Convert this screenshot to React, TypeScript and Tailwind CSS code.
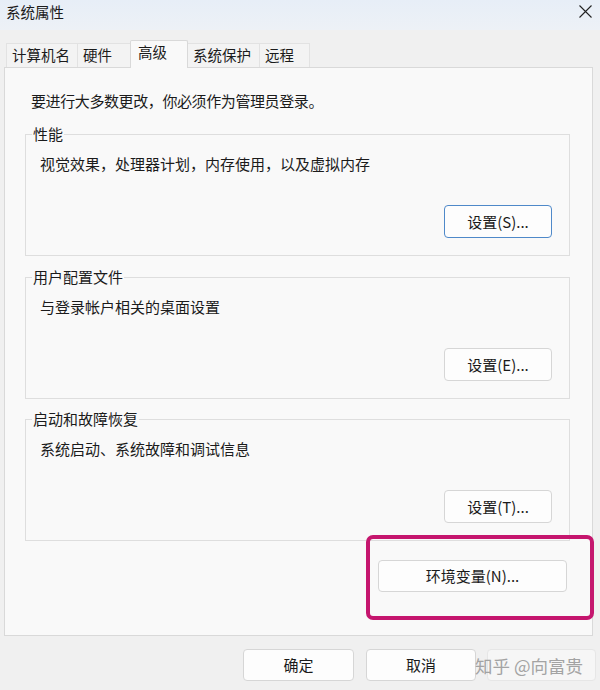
import React from "react";

const font = { fontFamily: '"Noto Sans CJK SC", "Noto Sans", sans-serif' };

function Tab({ label, w, selected, first }: { label: string; w: string; selected?: boolean; first?: boolean }) {
  if (selected) {
    return (
      <div
        className={`${w} h-[28px] -ml-px -mb-px relative z-10 border-l border-t border-r border-[#d9d9d9] bg-[#f9f9f9] pl-[7px] pt-[1px] text-[14.5px] leading-[20px] rounded-t-[2px]`}
      >
        {label}
      </div>
    );
  }
  return (
    <div
      className={`${w} h-[24px] ${first ? "" : "-ml-px"} border-l border-t border-r border-[#e2e2e2] bg-[#f3f3f3] pl-[5px] pt-[1px] text-[14.5px] leading-[20px]`}
    >
      {label}
    </div>
  );
}

function Btn({ label, w, h, primary }: { label: string; w: string; h: string; primary?: boolean }) {
  return (
    <div
      className={`${w} ${h} flex items-center justify-center rounded-[4px] bg-[#fdfdfd] text-[15px] leading-[20px] border ${
        primary ? "border-[#4f89c9]" : "border-[#d6d6d6]"
      }`}
    >
      {label}
    </div>
  );
}

function Group({ title, desc, btn }: { title: string; desc: string; btn: string; }) {
  return (
    <div className="relative ml-[20px] w-[545px] h-[122px] border border-[#dedede]">
      <span className="absolute left-[6px] -top-[11px] px-[1px] bg-[#f9f9f9] text-[15px] leading-[20px]">{title}</span>
      <p className="pl-[14px] pt-[19px] text-[15px] leading-[20px]">{desc}</p>
      <div className="flex justify-end pr-[17px] mt-[31px]">
        <Btn label={btn} w="w-[108px]" h="h-[33px]" primary={btn === "设置(S)..."} />
      </div>
    </div>
  );
}

export default function App() {
  return (
    <div className="w-[600px] h-[690px] bg-[#f0f0f0] relative overflow-hidden text-[#1b1b1b]" style={font}>
      {/* title bar */}
      <div className="h-[30px] bg-gradient-to-b from-[#e7eef7] to-[#edf1f6] flex items-start justify-between">
        <span className="ml-[6px] mt-[2px] text-[14.5px] leading-[20px]">系统属性</span>
        <svg className="mr-[8px] mt-[5px]" width="13" height="13" viewBox="0 0 13 13">
          <path d="M0.5 0.5 L12.5 12.5 M12.5 0.5 L0.5 12.5" stroke="#222" strokeWidth="1.1" fill="none" />
        </svg>
      </div>

      {/* tabs */}
      <div className="h-[37px] flex items-end pl-[6px]">
        <Tab label="计算机名" w="w-[72px]" first />
        <Tab label="硬件" w="w-[54px]" />
        <Tab label="高级" w="w-[58px]" selected />
        <Tab label="系统保护" w="w-[73px]" />
        <Tab label="远程" w="w-[51px]" />
      </div>

      {/* panel */}
      <div className="ml-[4px] w-[589px] h-[569px] border border-[#d9d9d9] bg-[#f9f9f9]">
        <p className="pl-[26px] pt-[23px] text-[15px] leading-[20px] tracking-[-0.4px]">要进行大多数更改，你必须作为管理员登录。</p>
        <div className="mt-[23px]">
          <Group title="性能" desc="视觉效果，处理器计划，内存使用，以及虚拟内存" btn="设置(S)..." />
        </div>
        <div className="mt-[21px]">
          <Group title="用户配置文件" desc="与登录帐户相关的桌面设置" btn="设置(E)..." />
        </div>
        <div className="mt-[20px]">
          <Group title="启动和故障恢复" desc="系统启动、系统故障和调试信息" btn="设置(T)..." />
        </div>
        <div className="flex justify-end pr-[25px] mt-[19px]">
          <Btn label="环境变量(N)..." w="w-[189px]" h="h-[32px]" />
        </div>
      </div>

      {/* bottom buttons */}
      <div className="flex justify-end pr-[4px] mt-[13px]">
        <Btn label="确定" w="w-[111px]" h="h-[32px]" />
        <div className="ml-[12px]">
          <Btn label="取消" w="w-[110px]" h="h-[32px]" />
        </div>
        <div className="ml-[11px] w-[109px] h-[32px] rounded-[4px] bg-[#f6f6f6] border border-[#e6e6e6]" />
      </div>

      {/* highlight */}
      <div className="absolute left-[366px] top-[535px] w-[228px] h-[85px] border-[4px] border-[#c5166e] rounded-[7px]" />

      {/* watermark */}
      <div className="absolute left-[475px] top-[654px] text-[17.5px] leading-[24px] text-[#a3a3a3] whitespace-nowrap">
        知乎 @向富贵
      </div>
    </div>
  );
}
